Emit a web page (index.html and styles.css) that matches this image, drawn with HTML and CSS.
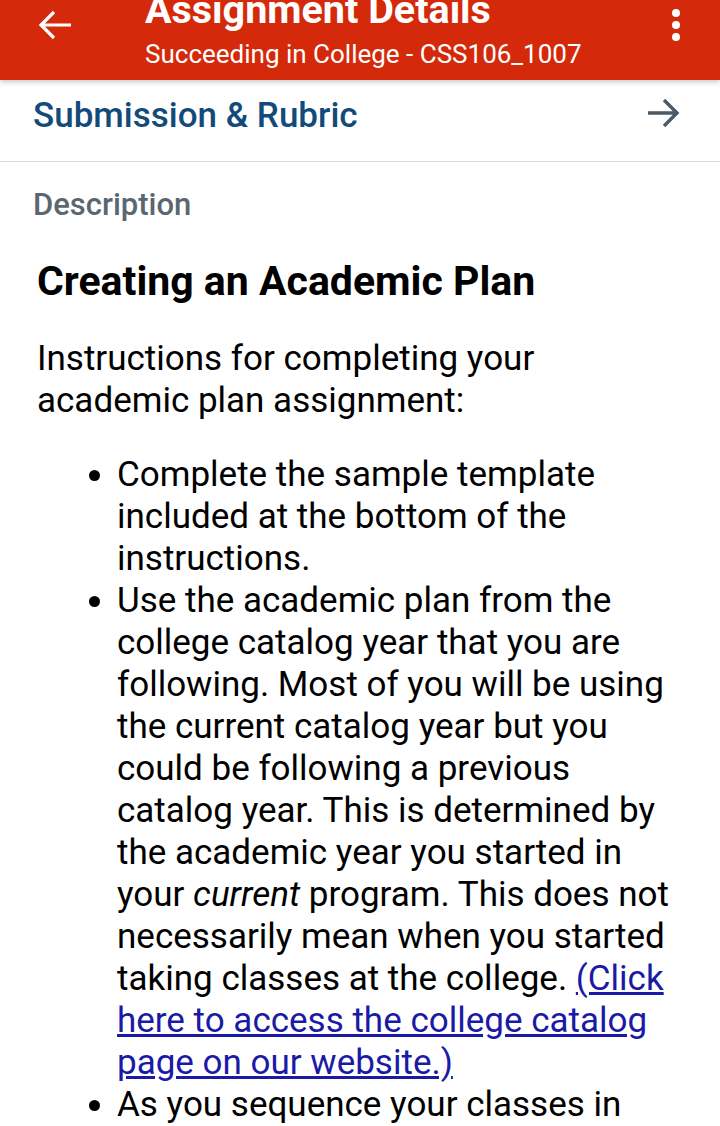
FILE: index.html
```html
<!DOCTYPE html>
<html lang="en">
<head>
<meta charset="utf-8">
<title>Assignment Details</title>
<link rel="stylesheet" href="styles.css">
</head>
<body>
<header class="appbar">
  <button class="icon-btn back" aria-label="Back">
    <svg width="34" height="32" viewBox="0 0 34 32"><path d="M33 16H3M16 3L3 16l13 13" fill="none" stroke="#fff" stroke-width="3.2"/></svg>
  </button>
  <div class="titles">
    <div class="title">Assignment Details</div>
    <div class="subtitle">Succeeding in College - CSS106_1007</div>
  </div>
  <button class="icon-btn more" aria-label="More">
    <span class="dot"></span><span class="dot"></span><span class="dot"></span>
  </button>
</header>
<main class="content">
  <a class="nav-row" href="#">
    <span class="nav-label">Submission &amp; Rubric</span>
    <svg class="nav-arrow" width="34" height="32" viewBox="0 0 34 32"><path d="M1 16h29M17 3l13 13-13 13" fill="none" stroke="#4b5a66" stroke-width="3.4"/></svg>
  </a>
  <section class="desc">
    <div class="section-label">Description</div>
    <h1 class="doc-title">Creating an Academic Plan</h1>
    <p class="body">Instructions for completing your academic plan assignment:</p>
    <ul class="list">
      <li>Complete the sample template included at the bottom of the instructions.</li>
      <li>Use the academic plan from the college catalog year that you are following. Most of you will be using the current catalog year but you could be following a previous catalog year. This is determined by the academic year you started in your <em>current</em> program. This does not necessarily mean when you started taking classes at the college. <a class="link" href="#">(Click here to access the college catalog page on our website.)</a></li>
      <li>As you sequence your classes in</li>
    </ul>
  </section>
</main>
</body>
</html>
```
FILE: styles.css
```css
* { box-sizing: border-box; }
html, body { margin: 0; padding: 0; }
body {
  width: 720px;
  height: 1126px;
  overflow: hidden;
  background: #fff;
  font-family: Roboto, "Noto Sans", sans-serif;
  color: #000;
}
.appbar {
  position: relative;
  z-index: 2;
  height: 80px;
  background: #d42a0b;
  display: flex;
  align-items: flex-start;
  box-shadow: 0 2px 5px rgba(0,0,0,0.22);
  overflow: hidden;
}
.icon-btn {
  background: none;
  border: 0;
  padding: 0;
  margin: 0;
  cursor: pointer;
}
.back {
  width: 145px;
  padding-left: 38px;
  padding-top: 9px;
  display: flex;
}
.titles {
  flex: 1;
  color: #fff;
  margin-top: -12px;
}
.title {
  font-size: 39.5px;
  font-weight: 700;
  line-height: 44px;
  white-space: nowrap;
}
.subtitle {
  font-size: 26px;
  line-height: 32px;
  margin-top: 6px;
  white-space: nowrap;
}
.more {
  width: 48px;
  padding-top: 9px;
  margin-right: 20px;
  display: flex;
  flex-direction: column;
  align-items: center;
  gap: 4px;
}
.dot {
  width: 8px;
  height: 8px;
  border-radius: 50%;
  background: #fff;
}
.content { display: block; }
.nav-row {
  display: flex;
  align-items: flex-start;
  justify-content: space-between;
  height: 82px;
  padding: 15px 39px 0 33px;
  border-bottom: 1px solid #dcdcdc;
  text-decoration: none;
}
.nav-label {
  color: #124b7a;
  font-size: 35px;
  font-weight: 500;
  line-height: 42px;
}
.nav-arrow { margin-top: 2px; }
.desc { padding: 23px 30px 0 37px; }
.section-label {
  color: #5b6770;
  font-size: 31px;
  font-weight: 500;
  margin-left: -4px;
  line-height: 40px;
}
.doc-title {
  font-size: 41px;
  font-weight: 700;
  margin: 32px 0 0;
  line-height: 48px;
}
.body {
  font-size: 35px;
  line-height: 42px;
  margin: 33px 0 0;
}
.list {
  font-size: 35px;
  line-height: 42px;
  margin: 32px 0 0;
  padding-left: 80px;
}
.link { color: #1a1aa6; text-decoration: underline; }
```
